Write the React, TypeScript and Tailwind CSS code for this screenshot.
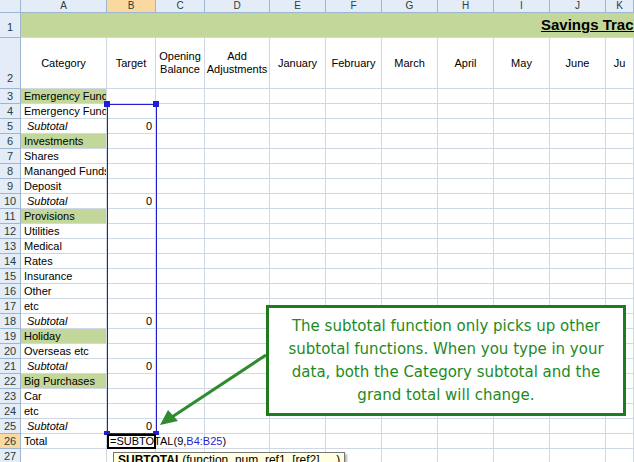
const cols = "grid-cols-[21px_86px_49px_49px_65px_56px_56px_56px_56px_56px_56px_28px]";
const letters = ["A", "B", "C", "D", "E", "F", "G", "H", "I", "J", "K"];
const heads = ["Category", "Target", "Opening Balance", "Add Adjustments", "January", "February", "March", "April", "May", "June", "Ju"];

type Row = { n: number; a?: string; kind?: "group" | "sub"; b?: string };
const rows: Row[] = [
  { n: 3, a: "Emergency Fund", kind: "group" },
  { n: 4, a: "Emergency Fund" },
  { n: 5, a: "Subtotal", kind: "sub", b: "0" },
  { n: 6, a: "Investments", kind: "group" },
  { n: 7, a: "Shares" },
  { n: 8, a: "Mananged Funds" },
  { n: 9, a: "Deposit" },
  { n: 10, a: "Subtotal", kind: "sub", b: "0" },
  { n: 11, a: "Provisions", kind: "group" },
  { n: 12, a: "Utilities" },
  { n: 13, a: "Medical" },
  { n: 14, a: "Rates" },
  { n: 15, a: "Insurance" },
  { n: 16, a: "Other" },
  { n: 17, a: "etc" },
  { n: 18, a: "Subtotal", kind: "sub", b: "0" },
  { n: 19, a: "Holiday", kind: "group" },
  { n: 20, a: "Overseas etc" },
  { n: 21, a: "Subtotal", kind: "sub", b: "0" },
  { n: 22, a: "Big Purchases", kind: "group" },
  { n: 23, a: "Car" },
  { n: 24, a: "etc" },
  { n: 25, a: "Subtotal", kind: "sub", b: "0" },
  { n: 26, a: "Total" },
  { n: 27 },
];

const cell = "border-r border-b border-[#d0d7e5]";
const hdr = "border-r border-b border-[#9eb6ce] bg-[#e4ecf7] text-[#27413e]";

export default function App() {
  return (
    <div className="relative w-[634px] h-[462px] overflow-hidden bg-white text-[11px] text-black" style={{ fontFamily: '"Liberation Sans", Arial, sans-serif' }}>
      <div className={`grid ${cols}`}>
        <div className={`${hdr} h-[13px]`} />
        {letters.map((l, i) => (
          <div key={l} className={`${hdr} h-[13px] flex items-center justify-center text-[10px] leading-none ${i === 1 ? "bg-[#f9d99f]" : ""}`}>{l}</div>
        ))}

        <div className={`${hdr} h-[25px] flex items-end justify-center pb-[2px]`}>1</div>
        <div className="col-span-11 h-[25px] bg-[#c4d79b] border-b border-[#d0d7e5] overflow-hidden whitespace-nowrap pl-[520px] pt-[2px] text-[15px] font-bold underline leading-[20px]">Savings Tracker</div>

        <div className={`${hdr} h-[51px] flex items-end justify-center pb-[2px]`}>2</div>
        {heads.map((h) => (
          <div key={h} className={`${cell} h-[51px] flex items-center justify-center text-center leading-[13px] overflow-hidden`}>{h}</div>
        ))}

        {rows.map((r) => (
          <Line key={r.n} r={r} />
        ))}
      </div>

      {/* selection B4:B25 */}
      <div className="absolute left-[107px] top-[104px] w-[50px] h-[330px] border border-[#1f1fcf]" />
      <div className="absolute left-[104px] top-[101px] w-[6px] h-[6px] bg-[#1f1fcf]" />
      <div className="absolute left-[153px] top-[101px] w-[6px] h-[6px] bg-[#1f1fcf]" />
      <div className="absolute left-[104px] top-[431px] w-[6px] h-[4px] bg-[#1f1fcf]" />
      <div className="absolute left-[153px] top-[431px] w-[6px] h-[4px] bg-[#1f1fcf]" />

      {/* arrow */}
      <svg className="absolute left-0 top-0" width="634" height="462">
        <line x1="266" y1="355" x2="172" y2="417" stroke="#2e8b2e" strokeWidth="3" />
        <polygon points="160,425 168,410 178,421" fill="#2e8b2e" />
      </svg>

      {/* callout */}
      <div className="absolute left-[266px] top-[305px] w-[360px] h-[111px] border-[3px] border-[#1e7b1e] bg-white flex items-center justify-center text-center px-3">
        <p className="text-[#1e8a1e] text-[15px] leading-[23px]" style={{ fontFamily: '"Comic Sans MS", "DejaVu Sans", sans-serif' }}>
          The subtotal function only picks up other subtotal functions. When you type in your data, both the Category subtotal and the grand total will change.
        </p>
      </div>

      {/* tooltip */}
      <div className="absolute left-[113px] top-[452px] h-[16px] px-[4px] bg-[#ffffe1] border border-[#767676] shadow-[2px_2px_2px_rgba(0,0,0,0.3)] whitespace-nowrap text-[12px] leading-[14px]">
        <span className="font-bold">SUBTOTAL</span>(function_num, ref1, [ref2], ...)
      </div>
    </div>
  );
}

function Line({ r }: { r: Row }) {
  const sel = r.n === 26;
  return (
    <>
      <div className={`${hdr} h-[15px] flex items-center justify-center leading-none ${sel ? "bg-[#f9d99f]" : ""}`}>{r.n}</div>
      <div className={`${cell} h-[15px] flex items-center px-[3px] whitespace-nowrap overflow-hidden leading-none ${r.kind === "group" ? "bg-[#c4d79b]" : ""} ${r.kind === "sub" ? "italic pl-[6px]" : ""}`}>{r.a}</div>
      {sel ? (
        <div className="relative h-[15px] border-2 border-black flex items-center whitespace-nowrap overflow-visible z-10 leading-none">
          <span className="pl-[1px]">=SUBTOTAL(9,<span className="text-[#1f1fcf]">B4:B25</span>)</span>
        </div>
      ) : (
        <div className={`${cell} h-[15px] flex items-center justify-end pr-[3px] leading-none`}>{r.b}</div>
      )}
      {Array.from({ length: 9 }).map((_, i) => (
        <div key={i} className={`${cell} h-[15px]`} />
      ))}
    </>
  );
}
